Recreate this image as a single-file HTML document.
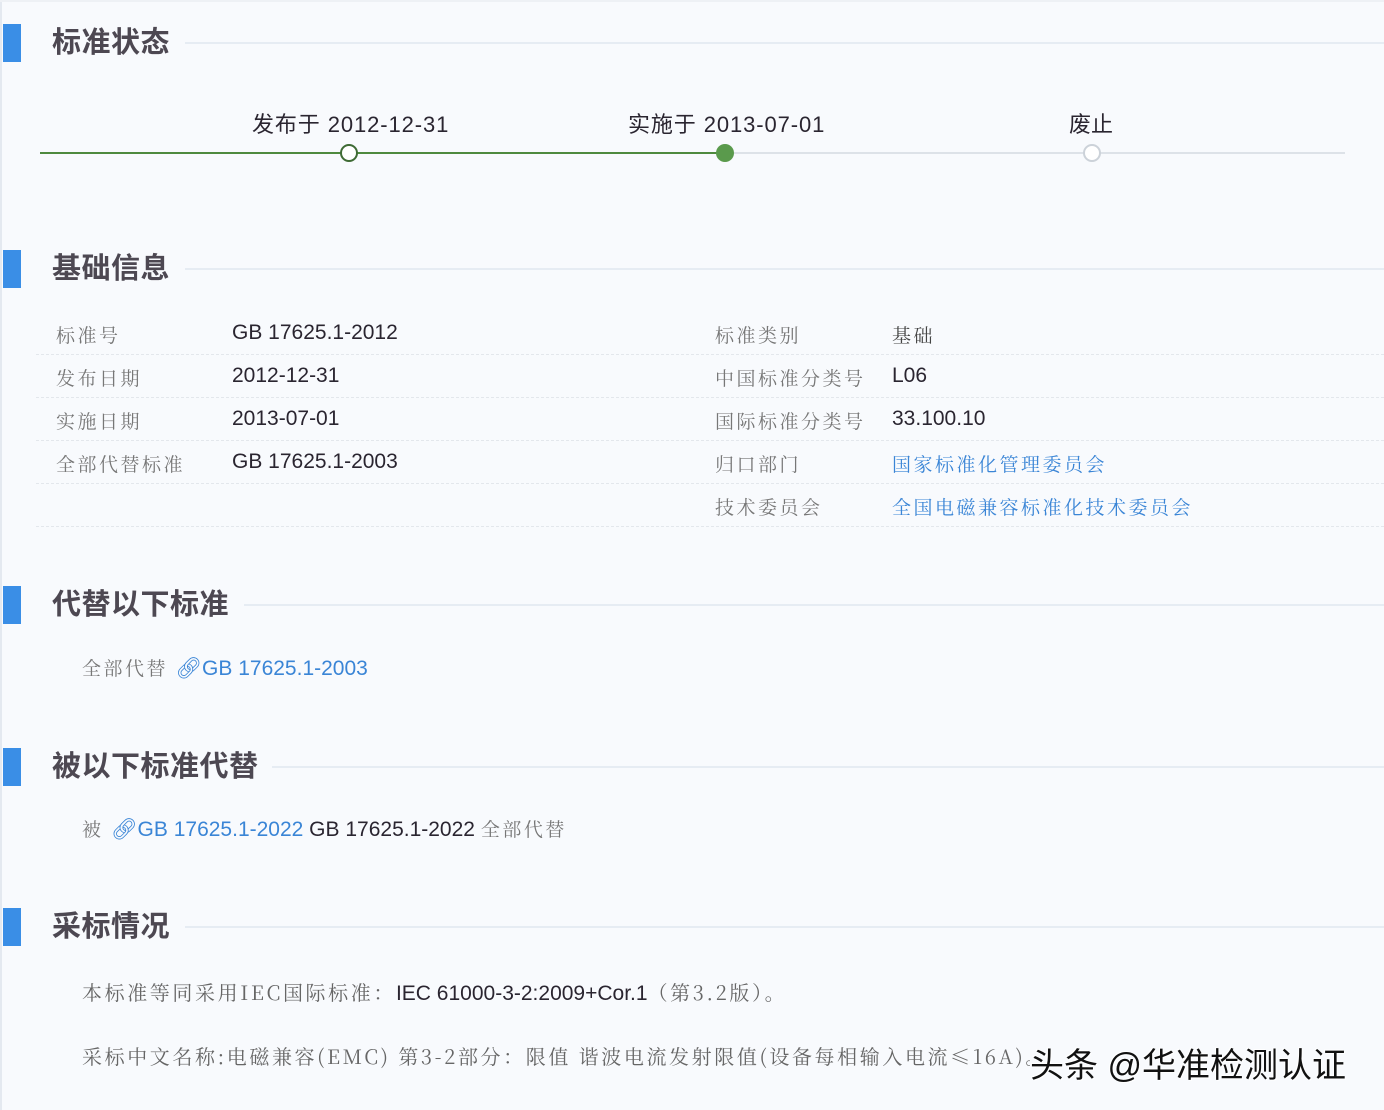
<!DOCTYPE html>
<html><head><meta charset="utf-8"><style>
body{margin:0;width:1384px;height:1110px;background:#f8fafd;font-family:"Liberation Sans","Noto Sans CJK SC",sans-serif;position:relative;overflow:hidden;color:#2a2530}
.a{position:absolute;white-space:nowrap}
.bar{position:absolute;left:3px;width:18px;height:38px;background:#3a8ee6}
.h{position:absolute;left:52px;font-size:29px;letter-spacing:0.5px;font-weight:bold;color:#4d4852;line-height:38px}
.hl{position:absolute;height:2px;background:#e6ecf3;right:0}
.l{color:#777;font-family:"Noto Serif CJK SC",serif;font-size:19px;letter-spacing:2.5px}
.v{font-size:21px}
.lk{color:#3a85d6}
.d{position:absolute;left:36px;right:0;border-top:1px dashed #e3e7ec}
.p{color:#666;font-family:"Noto Serif CJK SC",serif;font-size:20px;letter-spacing:2.6px}
</style></head><body>
<div style="position:absolute;left:0;top:0;width:2px;height:1110px;background:#e4e9f0"></div>
<div style="position:absolute;left:0;top:0;right:0;height:2px;background:#eef1f5"></div>

<div class="bar" style="top:24px"></div><div class="h" style="top:24px">标准状态</div><div class="hl" style="left:185px;top:42px"></div>
<div class="a" style="left:40px;top:152px;width:685px;height:2px;background:#4e8a3e"></div>
<div class="a" style="left:725px;top:152px;width:620px;height:2px;background:#dde2e8"></div>
<div class="a" style="left:340px;top:144px;width:14px;height:14px;border:2px solid #3f6b35;border-radius:50%;background:#fff"></div>
<div class="a" style="left:716px;top:144px;width:18px;height:18px;border-radius:50%;background:#5a9a4c"></div>
<div class="a" style="left:1083px;top:144px;width:14px;height:14px;border:2px solid #ccd2d9;border-radius:50%;background:#fff"></div>
<div class="a" style="left:252px;top:107px;font-size:22px;letter-spacing:0.9px">发布于 2012-12-31</div>
<div class="a" style="left:628px;top:107px;font-size:22px;letter-spacing:0.9px">实施于 2013-07-01</div>
<div class="a" style="left:1069px;top:107px;font-size:22px">废止</div>

<div class="bar" style="top:250px"></div><div class="h" style="top:250px">基础信息</div><div class="hl" style="left:185px;top:268px"></div>
<div class="a l" style="left:56px;top:321px">标准号</div><div class="a v" style="left:232px;top:321px">GB 17625.1-2012</div>
<div class="a l" style="left:715px;top:321px">标准类别</div><div class="a l" style="left:892px;top:321px;color:#444">基础</div>
<div class="d" style="top:354px"></div>
<div class="a l" style="left:56px;top:364px">发布日期</div><div class="a v" style="left:232px;top:364px">2012-12-31</div>
<div class="a l" style="left:715px;top:364px">中国标准分类号</div><div class="a v" style="left:892px;top:364px">L06</div>
<div class="d" style="top:397px"></div>
<div class="a l" style="left:56px;top:407px">实施日期</div><div class="a v" style="left:232px;top:407px">2013-07-01</div>
<div class="a l" style="left:715px;top:407px">国际标准分类号</div><div class="a v" style="left:892px;top:407px">33.100.10</div>
<div class="d" style="top:440px"></div>
<div class="a l" style="left:56px;top:450px">全部代替标准</div><div class="a v" style="left:232px;top:450px">GB 17625.1-2003</div>
<div class="a l" style="left:715px;top:450px">归口部门</div><div class="a l lk" style="left:892px;top:450px">国家标准化管理委员会</div>
<div class="d" style="top:483px"></div>
<div class="a l" style="left:715px;top:493px">技术委员会</div><div class="a l lk" style="left:892px;top:493px">全国电磁兼容标准化技术委员会</div>
<div class="d" style="top:526px"></div>

<div class="bar" style="top:586px"></div><div class="h" style="top:586px">代替以下标准</div><div class="hl" style="left:244px;top:604px"></div>
<div class="a" style="left:82px;top:654px"><span class="l">全部代替 </span><span class="v lk">&#x1F517;&#xFE0E;GB 17625.1-2003</span></div>

<div class="bar" style="top:748px"></div><div class="h" style="top:748px">被以下标准代替</div><div class="hl" style="left:272px;top:766px"></div>
<div class="a" style="left:82px;top:815px"><span class="l">被 </span><span class="v lk">&#x1F517;&#xFE0E;GB 17625.1-2022</span><span class="v"> GB 17625.1-2022 </span><span class="l">全部代替</span></div>

<div class="bar" style="top:908px"></div><div class="h" style="top:908px">采标情况</div><div class="hl" style="left:185px;top:926px"></div>
<div class="a" style="left:82px;top:977px"><span class="p">本标准等同采用IEC国际标准：</span><span class="v">IEC 61000-3-2:2009+Cor.1</span><span class="p">（第3.2版）。</span></div>
<div class="a p" style="left:82px;top:1041px">采标中文名称:电磁兼容(EMC) 第3-2部分：限值 谐波电流发射限值(设备每相输入电流≤16A)。</div>
<div class="a" style="left:1030px;top:1038px;font-size:34px;color:#111;text-shadow:1px 1px 0 #fff,-1px -1px 0 #fff;background:#f8fafd">头条 @华准检测认证</div>
</body></html>
